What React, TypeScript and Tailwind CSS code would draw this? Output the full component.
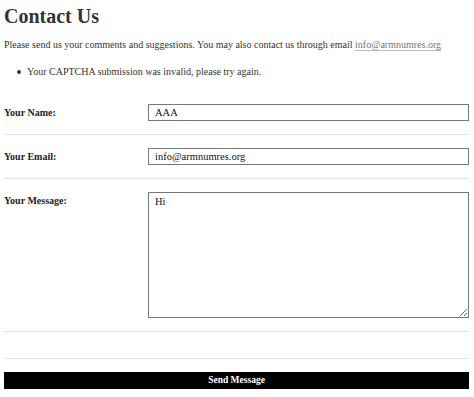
const serif = { fontFamily: '"Liberation Serif", "DejaVu Serif", serif' };

const Row = ({ label, children }: { label: string; children: React.ReactNode }) => {
  return (
    <div className="flex items-start border-b border-[#e2e2e2] py-[13px]">
      <label className="w-[144px] shrink-0 pt-[1px] text-[10px] font-bold leading-[16px] text-[#222]">
        {label}
      </label>
      <div className="flex-1">{children}</div>
    </div>
  );
};

export default function App() {
  return (
    <div className="h-[397px] w-[474px] overflow-hidden bg-white pl-[4px] pr-[5px] text-[#333]" style={serif}>
      <h1 className="pt-[4px] text-[20px] font-bold leading-[24px] text-[#333]">Contact Us</h1>
      <p className="mt-[9px] whitespace-nowrap text-[10px] leading-[16px] text-[#333]">
        Please send us your comments and suggestions. You may also contact us through email{" "}
        <a className="border-b border-[#bbb] text-[#777]">info@armnumres.org</a>
      </p>
      <ul className="mt-[11px] pl-[13px] text-[10px] leading-[16px]">
        <li className="flex items-center gap-[6px]">
          <span className="inline-block h-[4px] w-[4px] rounded-full bg-[#333]" />
          Your CAPTCHA submission was invalid, please try again.
        </li>
      </ul>
      <div className="mt-[11px]">
        <Row label="Your Name:">
          <input
            readOnly
            value="AAA"
            className="block h-[17px] w-full border border-[#777] px-[6px] text-[10.5px] text-[#111] outline-none"
            style={serif}
          />
        </Row>
        <Row label="Your Email:">
          <input
            readOnly
            value="info@armnumres.org"
            className="block h-[17px] w-full border border-[#777] px-[6px] text-[10.5px] text-[#111] outline-none"
            style={serif}
          />
        </Row>
        <Row label="Your Message:">
          <textarea
            readOnly
            value="Hi"
            className="block h-[126px] w-full resize-y border border-[#777] px-[6px] py-[1px] text-[10.5px] text-[#111] outline-none"
            style={serif}
          />
        </Row>
        <div className="h-[27px] border-b border-[#e2e2e2]" />
      </div>
      <button
        className="mt-[13px] block h-[17px] w-full bg-black text-[9.5px] font-bold leading-[17px] text-white"
        style={serif}
      >
        Send Message
      </button>
    </div>
  );
}
